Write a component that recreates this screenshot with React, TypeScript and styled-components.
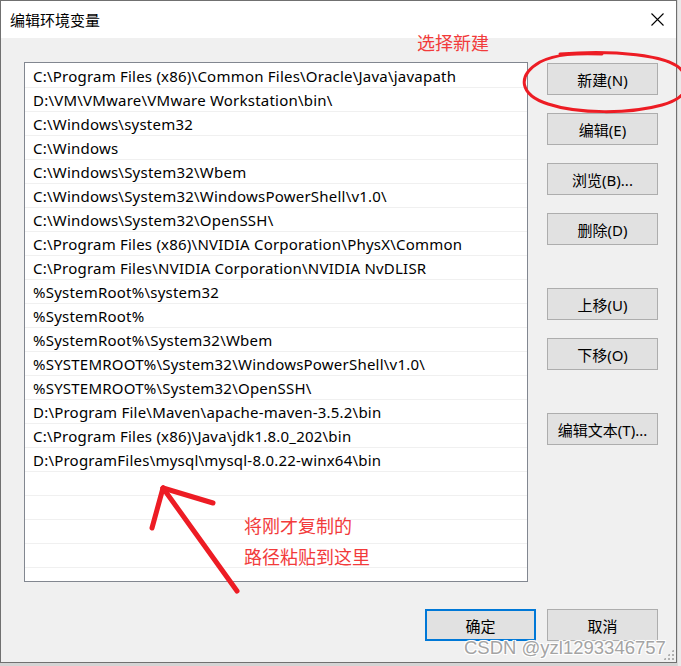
import React from "react";
import styled, { createGlobalStyle } from "styled-components";

const GlobalStyle = createGlobalStyle`
  html, body {
    margin: 0;
    padding: 0;
    background: #e6e6e6;
  }
  body {
    font-family: "Noto Sans", "Noto Sans CJK SC", sans-serif;
  }
`;

const PATHS = [
  "C:\\Program Files (x86)\\Common Files\\Oracle\\Java\\javapath",
  "D:\\VM\\VMware\\VMware Workstation\\bin\\",
  "C:\\Windows\\system32",
  "C:\\Windows",
  "C:\\Windows\\System32\\Wbem",
  "C:\\Windows\\System32\\WindowsPowerShell\\v1.0\\",
  "C:\\Windows\\System32\\OpenSSH\\",
  "C:\\Program Files (x86)\\NVIDIA Corporation\\PhysX\\Common",
  "C:\\Program Files\\NVIDIA Corporation\\NVIDIA NvDLISR",
  "%SystemRoot%\\system32",
  "%SystemRoot%",
  "%SystemRoot%\\System32\\Wbem",
  "%SYSTEMROOT%\\System32\\WindowsPowerShell\\v1.0\\",
  "%SYSTEMROOT%\\System32\\OpenSSH\\",
  "D:\\Program File\\Maven\\apache-maven-3.5.2\\bin",
  "C:\\Program Files (x86)\\Java\\jdk1.8.0_202\\bin",
  "D:\\ProgramFiles\\mysql\\mysql-8.0.22-winx64\\bin",
  "",
  "",
  "",
  "",
];

const SIDE_BUTTONS = [
  { label: "新建(N)", gap: 0 },
  { label: "编辑(E)", gap: 18 },
  { label: "浏览(B)...", gap: 18 },
  { label: "删除(D)", gap: 18 },
  { label: "上移(U)", gap: 43 },
  { label: "下移(O)", gap: 18 },
  { label: "编辑文本(T)...", gap: 43 },
];

const Page = styled.div`
  width: 681px;
  height: 666px;
  display: flex;
  background: linear-gradient(to bottom, #e6e6e6 0, #e6e6e6 663px, #d4d4d4 663px);
  overflow: hidden;
`;

const Window = styled.div`
  position: relative;
  width: 677px;
  height: 663px;
  box-sizing: border-box;
  border: 1px solid #707070;
  background: #f0f0f0;
  display: flex;
  flex-direction: column;
  color: #000;
  font-size: 15px;
`;

const TitleBar = styled.div`
  height: 37px;
  flex-shrink: 0;
  background: #fff;
  display: flex;
  align-items: center;
  justify-content: space-between;
  padding-left: 9px;
`;

const Title = styled.span`
  font-family: "Noto Sans CJK SC", sans-serif;
  font-size: 15px;
  line-height: 1;
`;

const CloseButton = styled.div`
  width: 38px;
  height: 37px;
  display: flex;
  align-items: center;
  justify-content: center;
`;

const Body = styled.div`
  flex: 1;
  display: flex;
  flex-direction: column;
  padding: 24px 18px 0 23px;
`;

const Main = styled.div`
  display: flex;
  gap: 19px;
`;

const ListBox = styled.div`
  width: 504px;
  height: 520px;
  box-sizing: border-box;
  border: 1px solid #828790;
  background: #fff;
  padding-top: 1px;
  overflow: hidden;
`;

const Row = styled.div`
  height: 23px;
  border-bottom: 1px solid #f0f0f0;
  padding-left: 8px;
  display: flex;
  align-items: center;
  font-family: "Noto Sans", "Noto Sans CJK SC", sans-serif;
  font-size: 15px;
  letter-spacing: 0.22px;
  white-space: nowrap;
`;

const SideColumn = styled.div`
  display: flex;
  flex-direction: column;
  padding-top: 1px;
`;

const Button = styled.div<{ $gap?: number; $default?: boolean }>`
  width: 111px;
  height: 32px;
  margin-top: ${(p) => p.$gap ?? 0}px;
  box-sizing: border-box;
  background: #e1e1e1;
  border: ${(p) => (p.$default ? "2px solid #0078d7" : "1px solid #adadad")};
  display: flex;
  align-items: center;
  justify-content: center;
  font-family: "Noto Sans", "Noto Sans CJK SC", sans-serif;
  font-size: 15px;
  white-space: nowrap;
`;

const Footer = styled.div`
  display: flex;
  justify-content: flex-end;
  gap: 11px;
  padding-top: 27px;
`;

const Overlay = styled.svg`
  position: absolute;
  left: -1px;
  top: -1px;
  width: 681px;
  height: 666px;
  pointer-events: none;
  overflow: visible;
`;

const Note = styled.div<{ $x: number; $y: number }>`
  position: absolute;
  left: ${(p) => p.$x}px;
  top: ${(p) => p.$y}px;
  color: #f23b3b;
  font-family: "Noto Sans CJK SC", sans-serif;
  font-size: 18px;
  line-height: 1;
  white-space: nowrap;
`;

const Watermark = styled.div`
  position: absolute;
  left: 463px;
  top: 636px;
  font-family: "Liberation Sans", Arial, sans-serif;
  font-size: 18.5px;
  color: #a4a4a4;
  white-space: nowrap;
  text-shadow: 0 0 2px #fff, 1px 1px 0 #fff, -1px -1px 0 #fff, 1px -1px 0 #fff,
    -1px 1px 0 #fff;
`;

const Grip = styled.div`
  position: absolute;
  right: 2px;
  bottom: 2px;
  width: 11px;
  height: 11px;
  background-image: radial-gradient(circle, #b0b0b0 1px, transparent 1.2px);
  background-size: 4px 4px;
  clip-path: polygon(100% 0, 100% 100%, 0 100%);
`;

const SideStrip = styled.div`
  flex: 1;
  background: #eaeaea;
  border-left: 1px solid #d8d8d8;
`;

export default function App() {
  return (
    <>
      <GlobalStyle />
      <Page>
        <Window>
          <TitleBar>
            <Title>编辑环境变量</Title>
            <CloseButton>
              <svg width="13" height="13" viewBox="0 0 13 13">
                <path d="M0.5 0.5 L12.5 12.5 M12.5 0.5 L0.5 12.5" stroke="#000" strokeWidth="1.1" />
              </svg>
            </CloseButton>
          </TitleBar>
          <Body>
            <Main>
              <ListBox>
                {PATHS.map((p, i) => (
                  <Row key={i}>{p}</Row>
                ))}
              </ListBox>
              <SideColumn>
                {SIDE_BUTTONS.map((b) => (
                  <Button key={b.label} $gap={b.gap}>
                    {b.label}
                  </Button>
                ))}
              </SideColumn>
            </Main>
            <Footer>
              <Button $default>确定</Button>
              <Button>取消</Button>
            </Footer>
          </Body>

          <Overlay viewBox="0 0 681 666">
            <path
              d="M560 54 C610 50, 672 54, 683 72 C692 88, 684 99, 662 105 C630 114, 578 114, 548 104 C520 95, 516 76, 540 62 C556 54, 576 53, 602 54"
              fill="none"
              stroke="#ed1c24"
              strokeWidth="3"
              strokeLinecap="round"
            />
            <g stroke="#ed1c24" strokeWidth="5" strokeLinecap="round" fill="none">
              <path d="M237 591 L163 488" />
              <path d="M163 488 L152 528" />
              <path d="M163 488 L213 503" />
            </g>
          </Overlay>
          <Note $x={416} $y={32}>选择新建</Note>
          <Note $x={243} $y={515}>将刚才复制的</Note>
          <Note $x={243} $y={546}>路径粘贴到这里</Note>
          <Watermark>CSDN @yzl1293346757</Watermark>
          <Grip />
        </Window>
        <SideStrip />
      </Page>
    </>
  );
}
